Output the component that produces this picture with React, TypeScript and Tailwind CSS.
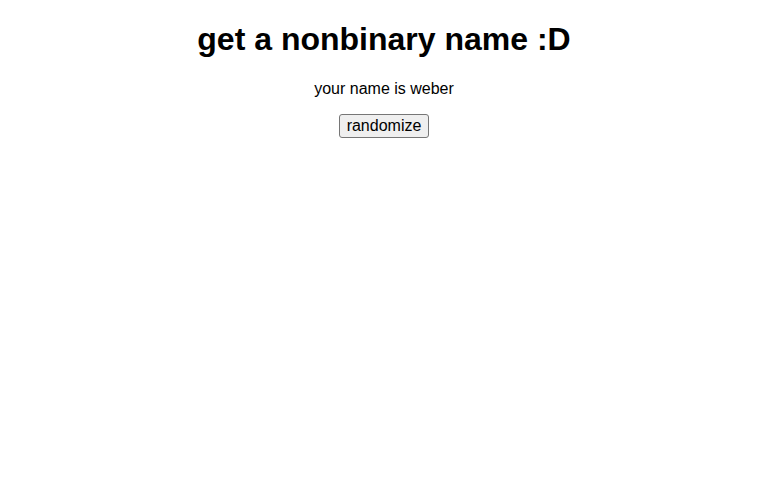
import { useState } from "react";

const NAMES = ["weber", "river", "sage", "quinn", "ash", "rowan", "wren", "jules"];

export default function App() {
  const [name, setName] = useState("weber");

  const randomize = () => {
    const next = NAMES[Math.floor(Math.random() * NAMES.length)];
    setName(next);
  };

  return (
    <div className="min-h-screen bg-white text-center text-black font-['Liberation_Sans',Arial,sans-serif]">
      <h1 className="pt-[21px] pb-[22px] text-[32px] leading-[37px] font-bold">
        get a nonbinary name :D
      </h1>
      <p className="text-base leading-[18px]">your name is {name}</p>
      <button
        type="button"
        onClick={randomize}
        className="mt-4 rounded-[3px] border border-[#767676] bg-[#efefef] px-[7px] py-[2px] text-base leading-[18px] text-black hover:bg-[#e5e5e5]"
      >
        randomize
      </button>
    </div>
  );
}
